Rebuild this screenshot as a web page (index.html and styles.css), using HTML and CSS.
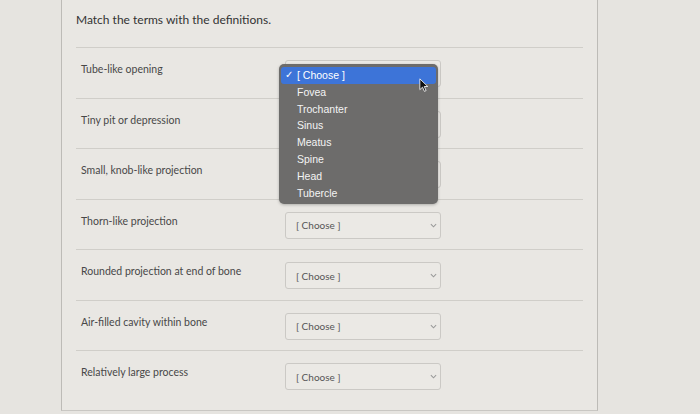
FILE: index.html
```html
<!DOCTYPE html>
<html>
<head>
<meta charset="utf-8">
<link rel="stylesheet" href="styles.css">
</head>
<body>
<div class="page">
  <div class="panel">
    <div class="title">Match the terms with the definitions.</div>
    <div class="rows">
      <div class="row"><div class="label">Tube-like opening</div><div class="select covered"><span>[ Choose ]</span><svg class="chev" viewBox="0 0 8 5"><path d="M1 1l3 3 3-3"/></svg></div></div>
      <div class="row"><div class="label">Tiny pit or depression</div><div class="select covered"><span>[ Choose ]</span><svg class="chev" viewBox="0 0 8 5"><path d="M1 1l3 3 3-3"/></svg></div></div>
      <div class="row"><div class="label">Small, knob-like projection</div><div class="select covered"><span>[ Choose ]</span><svg class="chev" viewBox="0 0 8 5"><path d="M1 1l3 3 3-3"/></svg></div></div>
      <div class="row"><div class="label">Thorn-like projection</div><div class="select"><span>[ Choose ]</span><svg class="chev" viewBox="0 0 8 5"><path d="M1 1l3 3 3-3"/></svg></div></div>
      <div class="row"><div class="label">Rounded projection at end of bone</div><div class="select"><span>[ Choose ]</span><svg class="chev" viewBox="0 0 8 5"><path d="M1 1l3 3 3-3"/></svg></div></div>
      <div class="row"><div class="label">Air-filled cavity within bone</div><div class="select"><span>[ Choose ]</span><svg class="chev" viewBox="0 0 8 5"><path d="M1 1l3 3 3-3"/></svg></div></div>
      <div class="row last"><div class="label">Relatively large process</div><div class="select"><span>[ Choose ]</span><svg class="chev" viewBox="0 0 8 5"><path d="M1 1l3 3 3-3"/></svg></div></div>
    </div>
  </div>
  <div class="menu">
    <div class="item selected"><span class="check">✓</span>[ Choose ]</div>
    <div class="item">Fovea</div>
    <div class="item">Trochanter</div>
    <div class="item">Sinus</div>
    <div class="item">Meatus</div>
    <div class="item">Spine</div>
    <div class="item">Head</div>
    <div class="item">Tubercle</div>
  </div>
  <svg class="cursor" viewBox="0 0 12 18"><path d="M1 1v13l3.2-3 2.3 5 2-0.9-2.2-4.9H10.5z" fill="#111" stroke="#fff" stroke-width="1"/></svg>
</div>
</body>
</html>
```
FILE: styles.css
```css
html, body {
  margin: 0;
  padding: 0;
  background: #e6e4e0;
}
.page {
  position: relative;
  width: 700px;
  height: 414px;
  overflow: hidden;
  font-family: Lato, "Liberation Sans", sans-serif;
}
.panel {
  margin-left: 61px;
  height: 410px;
  width: 507px;
  background: #e9e7e3;
  border-left: 1px solid #bdbbb7;
  border-right: 1px solid #bdbbb7;
  border-bottom: 1px solid #c9c7c3;
  padding: 0 14px;
}
.title {
  height: 47px;
  padding-top: 12px;
  box-sizing: border-box;
  font-size: 12px;
  color: #333;
}
.rows {
  display: flex;
  flex-direction: column;
}
.row {
  display: flex;
  align-items: flex-start;
  height: 50.5px;
  border-top: 1px solid #d0cec9;
  box-sizing: border-box;
}
.row.last {
  height: 60px;
}
.label {
  width: 204px;
  padding-left: 5px;
  padding-top: 15px;
  font-size: 10.5px;
  color: #484848;
}
.select {
  margin-top: 12px;
  width: 156px;
  height: 27px;
  box-sizing: border-box;
  border: 1px solid #cbc9c5;
  border-radius: 3px;
  background: #ebe9e5;
  display: flex;
  align-items: center;
  justify-content: space-between;
  padding: 0 3px 0 10px;
  font-size: 10px;
  color: #555;
}
.select.covered span {
  visibility: hidden;
}
.chev {
  width: 7px;
  height: 5px;
  fill: none;
  stroke: #9a9a9a;
  stroke-width: 1.2;
}
.menu {
  position: absolute;
  left: 279px;
  top: 64px;
  width: 159px;
  height: 140px;
  box-sizing: border-box;
  background: #6d6c6b;
  border-radius: 5px;
  padding: 3px 2px;
  font-family: "Liberation Sans", Arial, sans-serif;
  font-size: 10.5px;
  color: #f4f4f4;
  box-shadow: 0 1px 3px rgba(0,0,0,0.25);
}
.item {
  height: 16.8px;
  line-height: 16.8px;
  padding-left: 16px;
  position: relative;
}
.item.selected {
  background: #3d74d8;
  border-radius: 3px;
  color: #fff;
}
.check {
  position: absolute;
  left: 4px;
  top: 0;
  font-size: 10px;
}
.cursor {
  position: absolute;
  left: 419px;
  top: 78px;
  width: 10px;
  height: 15px;
}
```
